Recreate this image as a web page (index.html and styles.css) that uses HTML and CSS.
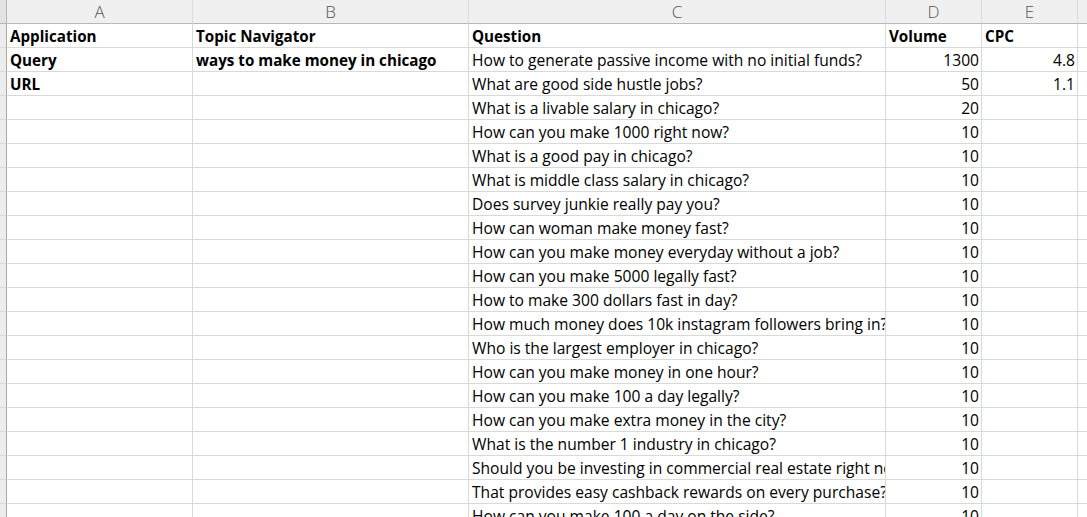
FILE: index.html
```html
<!DOCTYPE html>
<html>
<head>
<meta charset="utf-8">
<link rel="stylesheet" href="styles.css">
</head>
<body>
<div class="sheet">
  <div class="corner"></div>
  <div class="colhead">A</div>
  <div class="colhead">B</div>
  <div class="colhead">C</div>
  <div class="colhead">D</div>
  <div class="colhead">E</div>
  <div class="colhead"></div>

  <div class="rowhead"></div><div class="cell b">Application</div><div class="cell b">Topic Navigator</div><div class="cell b">Question</div><div class="cell b">Volume</div><div class="cell b">CPC</div><div class="cell"></div>
  <div class="rowhead"></div><div class="cell b">Query</div><div class="cell b">ways to make money in chicago</div><div class="cell">How to generate passive income with no initial funds?</div><div class="cell num">1300</div><div class="cell num">4.8</div><div class="cell"></div>
  <div class="rowhead"></div><div class="cell b">URL</div><div class="cell"></div><div class="cell">What are good side hustle jobs?</div><div class="cell num">50</div><div class="cell num">1.1</div><div class="cell"></div>
  <div class="rowhead"></div><div class="cell"></div><div class="cell"></div><div class="cell">What is a livable salary in chicago?</div><div class="cell num">20</div><div class="cell"></div><div class="cell"></div>
  <div class="rowhead"></div><div class="cell"></div><div class="cell"></div><div class="cell">How can you make 1000 right now?</div><div class="cell num">10</div><div class="cell"></div><div class="cell"></div>
  <div class="rowhead"></div><div class="cell"></div><div class="cell"></div><div class="cell">What is a good pay in chicago?</div><div class="cell num">10</div><div class="cell"></div><div class="cell"></div>
  <div class="rowhead"></div><div class="cell"></div><div class="cell"></div><div class="cell">What is middle class salary in chicago?</div><div class="cell num">10</div><div class="cell"></div><div class="cell"></div>
  <div class="rowhead"></div><div class="cell"></div><div class="cell"></div><div class="cell">Does survey junkie really pay you?</div><div class="cell num">10</div><div class="cell"></div><div class="cell"></div>
  <div class="rowhead"></div><div class="cell"></div><div class="cell"></div><div class="cell">How can woman make money fast?</div><div class="cell num">10</div><div class="cell"></div><div class="cell"></div>
  <div class="rowhead"></div><div class="cell"></div><div class="cell"></div><div class="cell">How can you make money everyday without a job?</div><div class="cell num">10</div><div class="cell"></div><div class="cell"></div>
  <div class="rowhead"></div><div class="cell"></div><div class="cell"></div><div class="cell">How can you make 5000 legally fast?</div><div class="cell num">10</div><div class="cell"></div><div class="cell"></div>
  <div class="rowhead"></div><div class="cell"></div><div class="cell"></div><div class="cell">How to make 300 dollars fast in day?</div><div class="cell num">10</div><div class="cell"></div><div class="cell"></div>
  <div class="rowhead"></div><div class="cell"></div><div class="cell"></div><div class="cell">How much money does 10k instagram followers bring in?</div><div class="cell num">10</div><div class="cell"></div><div class="cell"></div>
  <div class="rowhead"></div><div class="cell"></div><div class="cell"></div><div class="cell">Who is the largest employer in chicago?</div><div class="cell num">10</div><div class="cell"></div><div class="cell"></div>
  <div class="rowhead"></div><div class="cell"></div><div class="cell"></div><div class="cell">How can you make money in one hour?</div><div class="cell num">10</div><div class="cell"></div><div class="cell"></div>
  <div class="rowhead"></div><div class="cell"></div><div class="cell"></div><div class="cell">How can you make 100 a day legally?</div><div class="cell num">10</div><div class="cell"></div><div class="cell"></div>
  <div class="rowhead"></div><div class="cell"></div><div class="cell"></div><div class="cell">How can you make extra money in the city?</div><div class="cell num">10</div><div class="cell"></div><div class="cell"></div>
  <div class="rowhead"></div><div class="cell"></div><div class="cell"></div><div class="cell">What is the number 1 industry in chicago?</div><div class="cell num">10</div><div class="cell"></div><div class="cell"></div>
  <div class="rowhead"></div><div class="cell"></div><div class="cell"></div><div class="cell">Should you be investing in commercial real estate right now?</div><div class="cell num">10</div><div class="cell"></div><div class="cell"></div>
  <div class="rowhead"></div><div class="cell"></div><div class="cell"></div><div class="cell">That provides easy cashback rewards on every purchase?</div><div class="cell num">10</div><div class="cell"></div><div class="cell"></div>
  <div class="rowhead"></div><div class="cell"></div><div class="cell"></div><div class="cell">How can you make 100 a day on the side?</div><div class="cell num">10</div><div class="cell"></div><div class="cell"></div>
</div>
</body>
</html>
```
FILE: styles.css
```css
html, body {
  margin: 0;
  padding: 0;
  background: #ffffff;
  overflow: hidden;
}
.sheet {
  display: grid;
  grid-template-columns: 7px 186px 276px 417px 96px 96px 40px;
  grid-auto-rows: 24px;
  font-family: "Open Sans", "Noto Sans", sans-serif;
  font-size: 15.6px;
  color: #000;
}
.corner {
  background: #e3e3e3;
  border-right: 1px solid #b5b5b5;
  border-bottom: 1px solid #b5b5b5;
}
.colhead {
  background: #f0f0f0;
  border-right: 1px solid #dcdcdc;
  border-bottom: 1px solid #b8b8b8;
  color: #555;
  font-weight: 300;
  font-size: 17px;
  display: flex;
  align-items: center;
  justify-content: center;
  line-height: 1;
}
.rowhead {
  background: #ececec;
  border-right: 1px solid #a8a8a8;
  border-bottom: 1px solid #d8d8d8;
}
.cell {
  box-sizing: border-box;
  border-right: 1px solid #d9d9d9;
  border-bottom: 1px solid #d9d9d9;
  white-space: nowrap;
  overflow: hidden;
  padding: 0 3px;
  line-height: 24px;
}
.b { font-weight: 700; font-size: 15.2px; }
.num { text-align: right; padding-right: 2px; }
```
